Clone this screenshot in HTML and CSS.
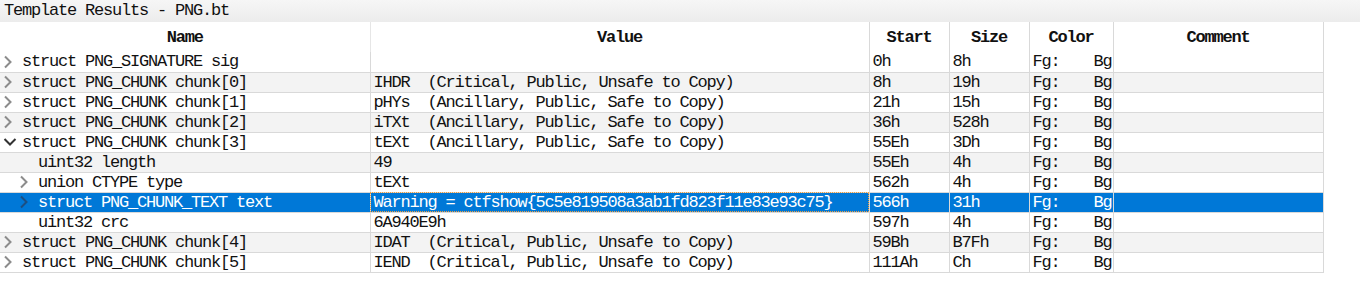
FILE: index.html
```html
<!DOCTYPE html>
<html lang="en">
<head>
    <meta charset="UTF-8">
    <title>Template Results - PNG.bt</title>
    <link rel="stylesheet" href="styles.css">
</head>
<body>
    <div class="title-bar">Template Results - PNG.bt</div>

    <table class="results">
        <colgroup>
            <col class="col-name">
            <col class="col-value">
            <col class="col-start">
            <col class="col-size">
            <col class="col-color">
            <col class="col-comment">
        </colgroup>
        <thead>
            <tr>
                <th>Name</th>
                <th>Value</th>
                <th>Start</th>
                <th>Size</th>
                <th>Color</th>
                <th>Comment</th>
            </tr>
        </thead>
        <tbody>
            <tr>
                <td class="name"><span class="arrow"><svg width="10" height="14" viewBox="0 0 10 14"><path d="M2 1.5 L7.5 7 L2 12.5"/></svg></span>struct PNG_SIGNATURE sig</td>
                <td></td>
                <td>0h</td>
                <td>8h</td>
                <td><div class="color"><span>Fg:</span><span>Bg</span></div></td>
                <td></td>
            </tr>
            <tr>
                <td class="name"><span class="arrow"><svg width="10" height="14" viewBox="0 0 10 14"><path d="M2 1.5 L7.5 7 L2 12.5"/></svg></span>struct PNG_CHUNK chunk[0]</td>
                <td>IHDR  (Critical, Public, Unsafe to Copy)</td>
                <td>8h</td>
                <td>19h</td>
                <td><div class="color"><span>Fg:</span><span>Bg</span></div></td>
                <td></td>
            </tr>
            <tr>
                <td class="name"><span class="arrow"><svg width="10" height="14" viewBox="0 0 10 14"><path d="M2 1.5 L7.5 7 L2 12.5"/></svg></span>struct PNG_CHUNK chunk[1]</td>
                <td>pHYs  (Ancillary, Public, Safe to Copy)</td>
                <td>21h</td>
                <td>15h</td>
                <td><div class="color"><span>Fg:</span><span>Bg</span></div></td>
                <td></td>
            </tr>
            <tr>
                <td class="name"><span class="arrow"><svg width="10" height="14" viewBox="0 0 10 14"><path d="M2 1.5 L7.5 7 L2 12.5"/></svg></span>struct PNG_CHUNK chunk[2]</td>
                <td>iTXt  (Ancillary, Public, Safe to Copy)</td>
                <td>36h</td>
                <td>528h</td>
                <td><div class="color"><span>Fg:</span><span>Bg</span></div></td>
                <td></td>
            </tr>
            <tr>
                <td class="name"><span class="arrow open"><svg width="14" height="10" viewBox="0 0 14 10"><path d="M1.5 2 L7 7.5 L12.5 2"/></svg></span>struct PNG_CHUNK chunk[3]</td>
                <td>tEXt  (Ancillary, Public, Safe to Copy)</td>
                <td>55Eh</td>
                <td>3Dh</td>
                <td><div class="color"><span>Fg:</span><span>Bg</span></div></td>
                <td></td>
            </tr>
            <tr>
                <td class="name child"><span class="arrow"></span>uint32 length</td>
                <td>49</td>
                <td>55Eh</td>
                <td>4h</td>
                <td><div class="color"><span>Fg:</span><span>Bg</span></div></td>
                <td></td>
            </tr>
            <tr>
                <td class="name child"><span class="arrow"><svg width="10" height="14" viewBox="0 0 10 14"><path d="M2 1.5 L7.5 7 L2 12.5"/></svg></span>union CTYPE type</td>
                <td>tEXt</td>
                <td>562h</td>
                <td>4h</td>
                <td><div class="color"><span>Fg:</span><span>Bg</span></div></td>
                <td></td>
            </tr>
            <tr class="selected">
                <td class="name child"><span class="arrow"><svg width="10" height="14" viewBox="0 0 10 14"><path d="M2 1.5 L7.5 7 L2 12.5"/></svg></span>struct PNG_CHUNK_TEXT text</td>
                <td class="focus">Warning = ctfshow{5c5e819508a3ab1fd823f11e83e93c75}</td>
                <td>566h</td>
                <td>31h</td>
                <td><div class="color"><span>Fg:</span><span>Bg</span></div></td>
                <td></td>
            </tr>
            <tr>
                <td class="name child"><span class="arrow"></span>uint32 crc</td>
                <td>6A940E9h</td>
                <td>597h</td>
                <td>4h</td>
                <td><div class="color"><span>Fg:</span><span>Bg</span></div></td>
                <td></td>
            </tr>
            <tr>
                <td class="name"><span class="arrow"><svg width="10" height="14" viewBox="0 0 10 14"><path d="M2 1.5 L7.5 7 L2 12.5"/></svg></span>struct PNG_CHUNK chunk[4]</td>
                <td>IDAT  (Critical, Public, Unsafe to Copy)</td>
                <td>59Bh</td>
                <td>B7Fh</td>
                <td><div class="color"><span>Fg:</span><span>Bg</span></div></td>
                <td></td>
            </tr>
            <tr>
                <td class="name"><span class="arrow"><svg width="10" height="14" viewBox="0 0 10 14"><path d="M2 1.5 L7.5 7 L2 12.5"/></svg></span>struct PNG_CHUNK chunk[5]</td>
                <td>IEND  (Critical, Public, Unsafe to Copy)</td>
                <td>111Ah</td>
                <td>Ch</td>
                <td><div class="color"><span>Fg:</span><span>Bg</span></div></td>
                <td></td>
            </tr>
        </tbody>
    </table>
</body>
</html>
```

FILE: styles.css
```css
* {
    box-sizing: border-box;
    margin: 0;
    padding: 0;
}

body {
    font-family: "Liberation Mono", "DejaVu Sans Mono", monospace;
    font-size: 17px;
    letter-spacing: -1.2px;
    color: #111;
    background-color: #fff;
}

.title-bar {
    height: 22px;
    line-height: 22px;
    padding-left: 4px;
    background: linear-gradient(#f6f6f6, #ececec);
    white-space: pre;
}

.results {
    width: 1323px;
    table-layout: fixed;
    border-collapse: collapse;
}
.col-name { width: 370px; }
.col-value { width: 499px; }
.col-start { width: 80px; }
.col-size { width: 80px; }
.col-color { width: 84px; }
.col-comment { width: 210px; }

.results th {
    height: 30px;
    font-weight: bold;
    text-align: center;
    vertical-align: middle;
    border-right: 1px solid #d9d9d9;
    padding-top: 1px;
}
.results th:first-child {
    border-right-color: #e6e6e6;
}

.results td {
    height: 20px;
    padding: 0 2px 0 3px;
    line-height: 19px;
    white-space: pre;
    overflow: hidden;
    border-right: 1px solid #d9d9d9;
    border-bottom: 1px solid #d9d9d9;
}
.results tbody tr:nth-child(even) td {
    background-color: #f3f3f3;
}

.results td.name {
    padding-left: 3px;
}
.results td.name.child {
    padding-left: 19px;
}
.arrow {
    display: inline-flex;
    align-items: center;
    width: 19px;
    height: 19px;
    vertical-align: top;
}
.arrow svg {
    display: block;
}
.arrow path {
    fill: none;
    stroke: #8c8c8c;
    stroke-width: 2;
}
.arrow.open path {
    stroke: #333;
}

.color {
    display: flex;
    justify-content: space-between;
    height: 19px;
    margin-right: -1px;
}

.results tbody tr.selected td {
    background-color: #0078d7;
    color: #fff;
}
.selected .arrow path {
    stroke: #1c4f82;
}
.results td.focus {
    outline: 1px dotted #f0a040;
    outline-offset: -1px;
}
```
